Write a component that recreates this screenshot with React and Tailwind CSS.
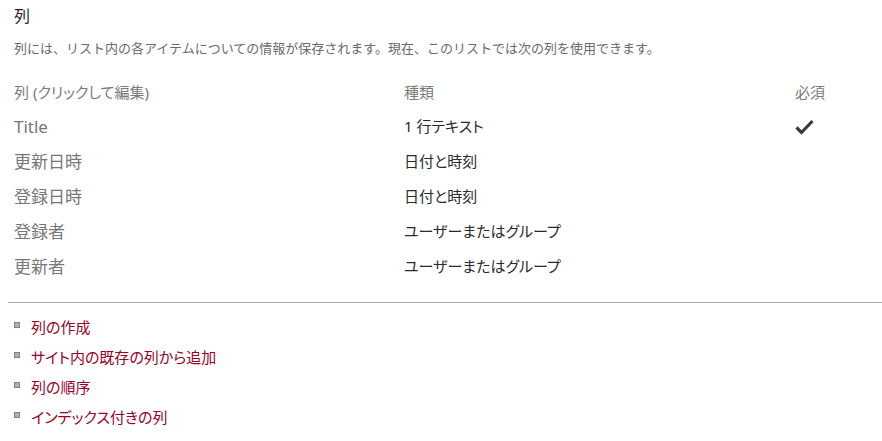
import React from "react";

const columns = [
  { name: "Title", type: "1 行テキスト", required: true },
  { name: "更新日時", type: "日付と時刻" },
  { name: "登録日時", type: "日付と時刻" },
  { name: "登録者", type: "ユーザーまたはグループ" },
  { name: "更新者", type: "ユーザーまたはグループ" },
];

const links = [
  "列の作成",
  "サイト内の既存の列から追加",
  "列の順序",
  "インデックス付きの列",
];

const CheckMark = () => (
  <svg width="19" height="16" viewBox="0 0 19 16" className="block">
    <path
      d="M1.5 8.5 L6.5 13.5 L17.5 2"
      fill="none"
      stroke="#3a3a3a"
      strokeWidth="3.2"
      strokeLinejoin="miter"
    />
  </svg>
);

export default function App() {
  return (
    <div
      className="bg-white w-[882px] h-[441px] pl-2"
      style={{ fontFamily: '"Noto Sans", "Noto Sans CJK JP", sans-serif' }}
    >
      <div className="pl-[6px]">
        <h2 className="text-[16px] leading-[32px] text-[#262626]">列</h2>
        <p className="mt-[4px] text-[13px] leading-[24px] text-[#6a6a6a]">
          列には、リスト内の各アイテムについての情報が保存されます。現在、このリストでは次の列を使用できます。
        </p>

        <div className="mt-[15px] grid grid-cols-[390px_391px_1fr] [font-feature-settings:'palt']">
          <div className="h-[34px] flex items-center text-[15px] text-[#7a7a7a]">
            列 (クリックして編集)
          </div>
          <div className="h-[34px] flex items-center text-[15px] text-[#7a7a7a]">
            種類
          </div>
          <div className="h-[34px] flex items-center text-[15px] text-[#7a7a7a]">
            必須
          </div>

          {columns.map((col) => (
            <React.Fragment key={col.name}>
              <div className="h-[35px] flex items-center text-[17px] text-[#777]">
                {col.name}
              </div>
              <div className="h-[35px] flex items-center text-[15px] text-[#2a2a2a]">
                {col.type}
              </div>
              <div className="h-[35px] flex items-center">
                {col.required && <CheckMark />}
              </div>
            </React.Fragment>
          ))}
        </div>
      </div>

      <hr className="mt-[18px] border-0 border-t border-[#ababab]" />

      <ul className="mt-[9px] pl-[6px] [font-feature-settings:'palt']">
        {links.map((l) => (
          <li key={l} className="h-[30px] flex items-center gap-[11px]">
            <span className="w-[6px] h-[6px] bg-[#b0b0b0] border border-[#808080] -mt-[4px]" />
            <a href="#" className="text-[15px] text-[#9b0026]">
              {l}
            </a>
          </li>
        ))}
      </ul>
    </div>
  );
}
